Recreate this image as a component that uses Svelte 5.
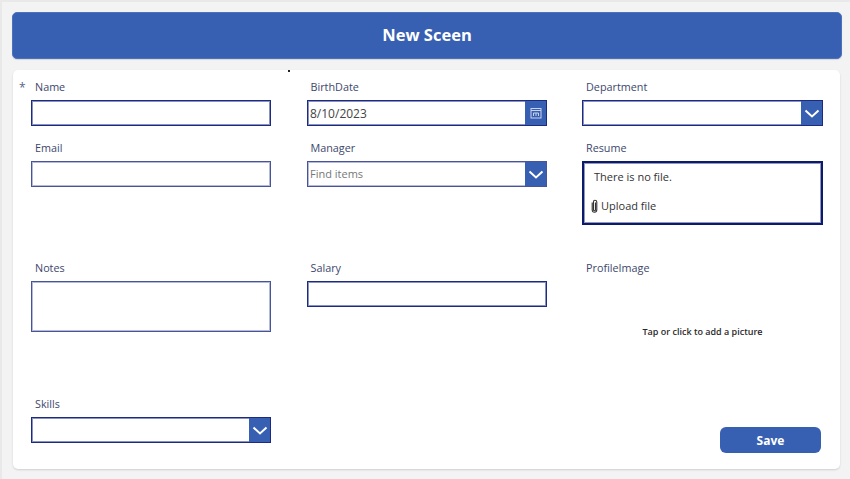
<script>
  const chevron = "M1.500 1.500 L8 7.500 L14.500 1.500";
</script>

<div class="screen">
  <header class="title">New Sceen</header>
  <main class="card">
    <span class="speck"></span>
    <div class="field">
      <span class="star">*</span>
      <div class="label">Name</div>
      <div class="box"></div>
    </div>
    <div class="field c2">
      <div class="label">BirthDate</div>
      <div class="box combo">
        <span class="value">8/10/2023</span>
        <span class="btn">
          <svg width="12" height="12" viewBox="0 0 12 12" fill="none" stroke="#c9d4ec" stroke-width="1">
            <rect x="1" y="1.500" width="10" height="9.500" />
            <path d="M1 3.500H11M3.500 9V6H6V9M6 6H8.500V9" />
          </svg>
        </span>
      </div>
    </div>
    <div class="field c3">
      <div class="label">Department</div>
      <div class="box combo">
        <span class="btn"><svg width="16" height="9" viewBox="0 0 16 9" fill="none" stroke="#fff" stroke-width="2"><path d={chevron} /></svg></span>
      </div>
    </div>

    <div class="field">
      <div class="label">Email</div>
      <div class="box soft"></div>
    </div>
    <div class="field c2">
      <div class="label">Manager</div>
      <div class="box combo soft">
        <span class="value hint">Find items</span>
        <span class="btn"><svg width="16" height="9" viewBox="0 0 16 9" fill="none" stroke="#fff" stroke-width="2"><path d={chevron} /></svg></span>
      </div>
    </div>
    <div class="field c3">
      <div class="label">Resume</div>
      <div class="attach">
        <div class="nofile">There is no file.</div>
        <div class="upload">
          <svg width="7" height="14" viewBox="0 0 7 14" fill="none" stroke="#333" stroke-width="1.100">
            <path d="M4.500 3.500V10.500C4.500 11.300 4.100 11.800 3.500 11.800C2.900 11.800 2.500 11.300 2.500 10.500V2.800C2.500 1.800 3 1.200 3.800 1.200C4.900 1.200 5.800 1.900 5.800 3V10.800C5.800 12.200 4.900 13.200 3.500 13.200C2.100 13.200 1.200 12.200 1.200 10.800V3.500" />
          </svg>
          <span>Upload file</span>
        </div>
      </div>
    </div>

    <div class="field">
      <div class="label">Notes</div>
      <div class="box tall soft"></div>
    </div>
    <div class="field c2">
      <div class="label">Salary</div>
      <div class="box"></div>
    </div>
    <div class="field c3">
      <div class="label">ProfileImage</div>
      <div class="picture">Tap or click to add a picture</div>
    </div>

    <div class="field">
      <div class="label">Skills</div>
      <div class="box combo">
        <span class="btn"><svg width="16" height="9" viewBox="0 0 16 9" fill="none" stroke="#fff" stroke-width="2"><path d={chevron} /></svg></span>
      </div>
    </div>
    <div class="field c2"></div>
    <div class="field c3 save-cell">
      <button class="save">Save</button>
    </div>
  </main>
</div>

<style>
  :global(body) {
    margin: 0;
    background: #f3f3f3;
  }
  .screen {
    box-sizing: border-box;
    width: 850px;
    height: 479px;
    padding: 10px 8px 0 10px;
    border-top: 2px solid #e9e9e9;
    border-left: 2px solid #e9e9e9;
    font-family: "Open Sans", sans-serif;
    overflow: hidden;
  }
  .title {
    box-sizing: border-box;
    height: 47px;
    width: 830px;
    background: #3860b2;
    border-radius: 5px;
    border: 1px solid #4d72bd;
    box-shadow: 0 1px 1px rgba(0, 0, 0, 0.12);
    color: #fff;
    font-size: 16.500px;
    font-weight: 700;
    line-height: 43px;
    text-align: center;
  }
  .card {
    box-sizing: border-box;
    position: relative;
    margin: 11px 0 0 1px;
    width: 827px;
    height: 399px;
    padding: 9px 0 0 18px;
    background: #fff;
    border-radius: 5px;
    box-shadow: 0 1px 2px rgba(0, 0, 0, 0.15);
    display: grid;
    grid-template-columns: repeat(3, 240px);
    grid-template-rows: 61px 120px 136px 1fr;
    column-gap: 36px;
  }
  .speck {
    position: absolute;
    left: 275px;
    top: 0;
    width: 2px;
    height: 2px;
    background: #222;
  }
  .field {
    position: relative;
  }
  .c2 .label {
    padding-left: 3.500px;
  }
  .c3 {
    margin-left: -1px;
  }
  .star {
    position: absolute;
    left: -12px;
    top: 1px;
    font-size: 12px;
    line-height: 16px;
    color: #5a6288;
  }
  .label {
    height: 21px;
    padding-left: 4px;
    font-size: 10.800px;
    line-height: 16px;
    color: #3d476d;
  }
  .box {
    box-sizing: border-box;
    height: 26px;
    border: 1px solid #1c2b80;
    box-shadow: inset 0 0 0 1px rgba(40, 55, 140, 0.55);
    background: #fff;
  }
  .box.soft {
    border-color: #47539a;
    box-shadow: inset 0 0 0 1px rgba(70, 85, 155, 0.4);
  }
  .tall {
    height: 51px;
  }
  .combo {
    display: flex;
    align-items: stretch;
    justify-content: flex-end;
  }
  .value {
    flex: 1;
    padding-left: 2px;
    font-size: 12px;
    line-height: 25px;
    color: #444;
  }
  .hint {
    font-size: 11px;
    line-height: 24px;
    color: #777;
  }
  .btn {
    width: 21px;
    background: #3860b2;
    display: flex;
    align-items: center;
    justify-content: center;
  }
  .attach {
    box-sizing: border-box;
    height: 64px;
    border: 2px solid #0c1a6b;
    box-shadow: inset 0 0 0 1px rgba(12, 26, 107, 0.45);
    background: #fff;
    padding: 5px 0 0 10px;
    font-size: 11px;
    color: #333;
  }
  .nofile {
    line-height: 18px;
  }
  .upload {
    display: flex;
    align-items: center;
    gap: 3px;
    margin: 11px 0 0 -3px;
    line-height: 18px;
  }
  .picture {
    padding-top: 44px;
    text-align: center;
    font-size: 9px;
    font-weight: 600;
    line-height: 14px;
    color: #2a2a2a;
  }
  .save-cell {
    display: flex;
    justify-content: flex-end;
    align-items: flex-start;
    padding-top: 31px;
    padding-right: 2px;
  }
  .save {
    box-sizing: border-box;
    width: 101px;
    height: 26px;
    border: 0;
    border-radius: 6px;
    background: #3860b2;
    color: #fff;
    font-family: inherit;
    font-size: 12px;
    font-weight: 700;
    padding: 0;
  }
</style>
